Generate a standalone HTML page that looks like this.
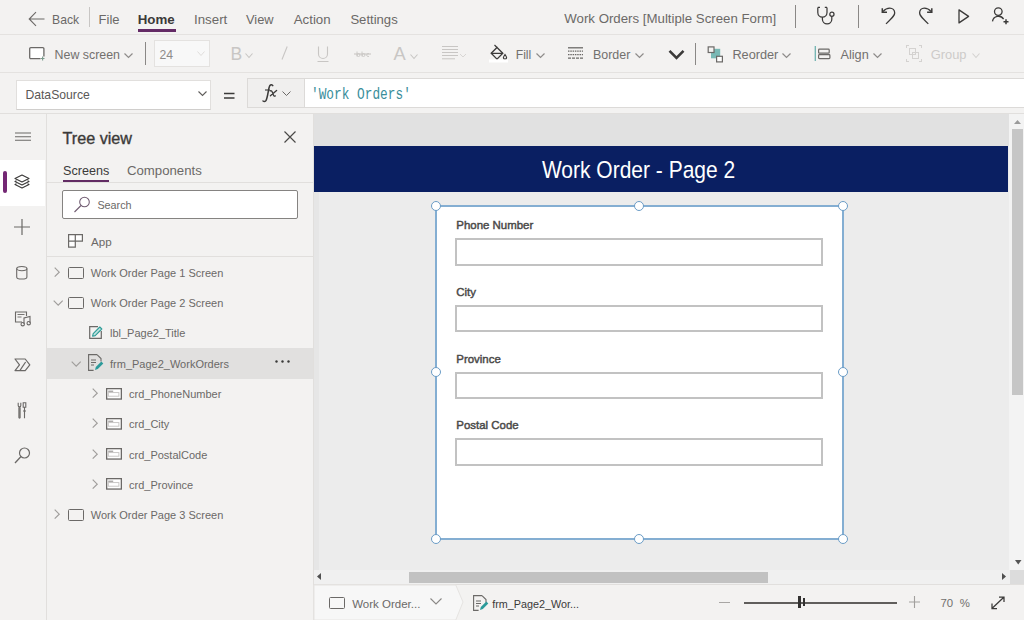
<!DOCTYPE html>
<html><head><meta charset="utf-8">
<style>
*{box-sizing:border-box;margin:0;padding:0}
html,body{width:1024px;height:620px;overflow:hidden;background:#f3f2f1;font-family:"Liberation Sans",sans-serif;color:#605e5c}
.a{position:absolute}
.t{position:absolute;white-space:nowrap;line-height:1}
svg{position:absolute;overflow:visible}
</style></head><body>
<div class="a" style="left:0px;top:0px;width:1024px;height:35px;background:#f3f2f1;border-bottom:1px solid #e4e2e0"></div>
<svg style="left:28px;top:11px" width="17" height="16" viewBox="0 0 17 16"><path d="M16.5 8H1.5M8 1.2L1.2 8 8 14.8" fill="none" stroke="#6b6967" stroke-width="1.1"/></svg>
<div class="t" style="left:52px;top:14px;font-size:12.2px;color:#6b6967;">Back</div>
<div class="a" style="left:88.5px;top:6.5px;width:1px;height:20px;background:#c8c6c4"></div>
<div class="t" style="left:98.6px;top:13px;font-size:13px;color:#6b6967;">File</div>
<div class="t" style="left:137.7px;top:13px;font-size:13.3px;color:#3b3a39;font-weight:bold">Home</div>
<div class="a" style="left:137.5px;top:29.2px;width:38.5px;height:2.6px;background:#642b66"></div>
<div class="t" style="left:194px;top:13px;font-size:13.3px;color:#6b6967;">Insert</div>
<div class="t" style="left:246px;top:14px;font-size:12.85px;color:#6b6967;">View</div>
<div class="t" style="left:293.7px;top:13px;font-size:13.3px;color:#6b6967;">Action</div>
<div class="t" style="left:350.4px;top:13px;font-size:13.1px;color:#6b6967;">Settings</div>
<div class="t" style="left:564.3px;top:12px;font-size:13.25px;color:#6b6967;">Work Orders [Multiple Screen Form]</div>
<div class="a" style="left:794.5px;top:4.5px;width:1px;height:23.5px;background:#8a8886"></div>
<svg style="left:816px;top:6px" width="20" height="20" viewBox="0 0 20 20"><path d="M1.8 1.4V6.6a4.6 4.6 0 0 0 9.2 0V1.4M1.8 1.4h2.2M11 1.4H8.8M6.4 11.2v2a4.7 4.7 0 0 0 9.4 0v-2.8" fill="none" stroke="#3b3a39" stroke-width="1.25"/><circle cx="15.9" cy="8.3" r="2.1" fill="none" stroke="#3b3a39" stroke-width="1.25"/></svg>
<div class="a" style="left:858px;top:4.5px;width:1px;height:23.5px;background:#8a8886"></div>
<svg style="left:880px;top:5px" width="18" height="20" viewBox="0 0 18 20"><path d="M2.3 3.2v4h4.7" fill="none" stroke="#3b3a39" stroke-width="1.5"/><path d="M2.9 6.6C5 4.2 7.4 3.1 9.8 3.1c2.8 0 4.9 2.2 4.9 4.9 0 2.2-1.3 3.8-8.7 10.9" fill="none" stroke="#3b3a39" stroke-width="1.3"/></svg>
<svg style="left:916px;top:5px" width="18" height="20" viewBox="0 0 18 20"><path d="M15.8 3.2v4h-4.7" fill="none" stroke="#3b3a39" stroke-width="1.5"/><path d="M15.2 6.6C13.1 4.2 10.7 3.1 8.3 3.1 5.5 3.1 3.6 5.3 3.6 8c0 2.2 1.3 3.8 8.7 10.9" fill="none" stroke="#3b3a39" stroke-width="1.3"/></svg>
<svg style="left:958px;top:8.5px" width="12" height="15" viewBox="0 0 12 15"><path d="M1 0.9v13l9.6-6.5z" fill="none" stroke="#3b3a39" stroke-width="1.3" stroke-linejoin="round"/></svg>
<svg style="left:991px;top:7px" width="19" height="17" viewBox="0 0 19 17"><circle cx="7.3" cy="4.6" r="3.8" fill="none" stroke="#3b3a39" stroke-width="1.3"/><path d="M1.5 14.4A6 6 0 0 1 12.6 12.2" fill="none" stroke="#3b3a39" stroke-width="1.3"/><path d="M15 12.2v5M12.5 14.7h5" stroke="#3b3a39" stroke-width="1.5"/></svg>
<div class="a" style="left:0px;top:35px;width:1024px;height:38px;background:#f3f2f1;border-bottom:1px solid #e4e2e0"></div>
<svg style="left:29px;top:47px" width="17" height="14" viewBox="0 0 17 14"><path d="M11.5 11.7H1.8A1.1 1.1 0 0 1 .7 10.6V1.8A1.1 1.1 0 0 1 1.8 .7h12A1.1 1.1 0 0 1 14.9 1.8V9.5" fill="#fff" stroke="#6b6967" stroke-width="1.3"/><path d="M13.6 9.6v3.8M11.7 11.5h3.8" stroke="#7a9a8c" stroke-width="1.1"/></svg>
<div class="t" style="left:54.6px;top:49px;font-size:12.4px;color:#72706e;">New screen</div>
<svg style="left:124px;top:52.8px" width="9" height="5" viewBox="0 0 9 5"><path d="M0.5 0.5l4.0 4 4.0 -4" fill="none" stroke="#8e8c8a" stroke-width="1.2"/></svg>
<div class="a" style="left:145px;top:42px;width:1px;height:22.5px;background:#8a8886"></div>
<div class="a" style="left:153.5px;top:39.5px;width:56px;height:27px;border:1px solid #e4e2e0;background:#f8f8f8"></div>
<div class="t" style="left:159.6px;top:49px;font-size:12.2px;color:#8e8c8a;">24</div>
<svg style="left:197px;top:51px" width="8" height="5" viewBox="0 0 8 5"><path d="M0.5 0.5l3.5 4 3.5 -4" fill="none" stroke="#e0dedc" stroke-width="1"/></svg>
<div class="t" style="left:230.5px;top:46px;font-size:17.5px;color:#c8c6c4;">B</div>
<svg style="left:245px;top:53px" width="8" height="5" viewBox="0 0 8 5"><path d="M0.5 0.5l3.5 4 3.5 -4" fill="none" stroke="#c8c6c4" stroke-width="1.1"/></svg>
<svg style="left:281px;top:46px" width="7" height="14" viewBox="0 0 7 14"><path d="M6.2 0.5L1 13.5" stroke="#c8c6c4" stroke-width="1.1"/></svg>
<svg style="left:317px;top:46px" width="12" height="17" viewBox="0 0 12 17"><path d="M1.5 0.5v7.5a4.5 4.5 0 0 0 9 0V0.5M0.5 15.5h11" fill="none" stroke="#c8c6c4" stroke-width="1.1"/></svg>
<svg style="left:354px;top:50px" width="17" height="8" viewBox="0 0 17 8"><path d="M0 4h17" stroke="#c8c6c4" stroke-width="1.1"/><path d="M3 1.5v5M3 5a1.5 1.5 0 1 0 3 0 1.5 1.5 0 1 0-3 0M8 1.5v5M8 5a1.5 1.5 0 1 0 3 0 1.5 1.5 0 1 0-3 0M15 3.8a1.5 1.5 0 1 0 0 2.5" fill="none" stroke="#c8c6c4" stroke-width="0.9"/></svg>
<div class="t" style="left:393.5px;top:45px;font-size:18.3px;color:#c8c6c4;">A</div>
<svg style="left:410px;top:54px" width="8" height="5" viewBox="0 0 8 5"><path d="M0.5 0.5l3.5 4 3.5 -4" fill="none" stroke="#c8c6c4" stroke-width="1.1"/></svg>
<svg style="left:442px;top:46px" width="25" height="14" viewBox="0 0 25 14"><path d="M0 0.5h16M0 3.5h16M0 6.5h16M0 9.5h16M0 12.8h13" stroke="#c8c6c4" stroke-width="1"/><path d="M18 8l3 3 3-3" fill="none" stroke="#d8d6d4" stroke-width="1"/></svg>
<svg style="left:489px;top:44px" width="20" height="19" viewBox="0 0 20 19"><path d="M2.2 9.3l5.8-5.8 5.8 5.8-5.8 5.8z" fill="none" stroke="#3b3a39" stroke-width="1.3"/><path d="M5.5 1l2.5 2.5M2.2 9.3h11.6" fill="none" stroke="#3b3a39" stroke-width="1.2"/><path d="M16 10.5c-1 1.5-1.6 2.4-1.6 3a1.6 1.6 0 0 0 3.2 0c0-.6-.6-1.5-1.6-3z" fill="none" stroke="#3b3a39" stroke-width="1.2"/><rect x="0" y="15.5" width="19" height="3" fill="#ffffff"/></svg>
<div class="t" style="left:515.7px;top:49px;font-size:12.2px;color:#72706e;">Fill</div>
<svg style="left:535.5px;top:52.8px" width="9" height="5" viewBox="0 0 9 5"><path d="M0.5 0.5l4.0 4 4.0 -4" fill="none" stroke="#8e8c8a" stroke-width="1.2"/></svg>
<svg style="left:567.5px;top:47px" width="16" height="12" viewBox="0 0 16 12"><path d="M0 .8h15" stroke="#6b6967" stroke-width="1.3"/><path d="M0 4.2h15M0 7.6h15" stroke="#6b6967" stroke-width="1.3" stroke-dasharray="1.5 .8"/><path d="M0 11.2h15" stroke="#6b6967" stroke-width="1.3" stroke-dasharray="3 1"/></svg>
<div class="t" style="left:593px;top:49px;font-size:12.45px;color:#72706e;">Border</div>
<svg style="left:635.3px;top:52.8px" width="9" height="5" viewBox="0 0 9 5"><path d="M0.5 0.5l4.0 4 4.0 -4" fill="none" stroke="#8e8c8a" stroke-width="1.2"/></svg>
<svg style="left:668px;top:49px" width="17" height="11" viewBox="0 0 17 11"><path d="M1.5 1.8l7 7 7-7" fill="none" stroke="#3b3a39" stroke-width="2.6"/></svg>
<div class="a" style="left:695px;top:42.5px;width:1px;height:22px;background:#8a8886"></div>
<svg style="left:707px;top:45.5px" width="17" height="17" viewBox="0 0 17 17"><rect x="4" y="2.8" width="9.2" height="9.5" fill="#79b9b5"/><rect x="1.2" y="0.9" width="5.8" height="5.6" fill="#f3f2f1" stroke="#6b6967" stroke-width="1.2"/><rect x="9.6" y="10.3" width="5.8" height="5.6" fill="#fff" stroke="#6b6967" stroke-width="1.2"/></svg>
<div class="t" style="left:732.4px;top:49px;font-size:12.73px;color:#72706e;">Reorder</div>
<svg style="left:782px;top:52.8px" width="9" height="5" viewBox="0 0 9 5"><path d="M0.5 0.5l4.0 4 4.0 -4" fill="none" stroke="#8e8c8a" stroke-width="1.2"/></svg>
<svg style="left:813px;top:45px" width="18" height="17" viewBox="0 0 18 17"><path d="M2.3 1v15" stroke="#6fb3af" stroke-width="1.3"/><rect x="5.6" y="4.2" width="10.6" height="4" rx=".8" fill="none" stroke="#6b6967" stroke-width="1.2"/><rect x="5.6" y="9.6" width="11.3" height="4" rx=".8" fill="none" stroke="#6b6967" stroke-width="1.2"/></svg>
<div class="t" style="left:840.5px;top:49px;font-size:12.7px;color:#72706e;">Align</div>
<svg style="left:873px;top:52.8px" width="9" height="5" viewBox="0 0 9 5"><path d="M0.5 0.5l4.0 4 4.0 -4" fill="none" stroke="#8e8c8a" stroke-width="1.2"/></svg>
<svg style="left:906px;top:45px" width="16" height="17" viewBox="0 0 16 17"><path d="M0.5 0v3M0 .5h3M15.5 0v3M13 .5h3M0.5 17v-3M0 16.5h3M15.5 17v-3M13 16.5h3" stroke="#d4d2d0" stroke-width="1"/><rect x="3.5" y="3.5" width="6" height="6" fill="none" stroke="#d4d2d0"/><rect x="6.5" y="7.5" width="6" height="6" fill="none" stroke="#d4d2d0"/></svg>
<div class="t" style="left:930.7px;top:49px;font-size:12.9px;color:#cdcbc9;">Group</div>
<svg style="left:971.5px;top:53px" width="8" height="5" viewBox="0 0 8 5"><path d="M0.5 0.5l3.5 4 3.5 -4" fill="none" stroke="#d4d2d0" stroke-width="1.1"/></svg>
<div class="a" style="left:0px;top:73px;width:1024px;height:41px;background:#f3f2f1;border-bottom:1px solid #e1dfdd"></div>
<div class="a" style="left:16px;top:79.5px;width:195px;height:30.5px;background:#fff;border:1px solid #e1dfdd;border-bottom-color:#d0cecc"></div>
<div class="t" style="left:25.4px;top:89px;font-size:12.2px;color:#5a5856;">DataSource</div>
<svg style="left:198.2px;top:91.2px" width="9" height="5" viewBox="0 0 9 5"><path d="M0.5 0.5l4.0 4 4.0 -4" fill="none" stroke="#605e5c" stroke-width="1.1"/></svg>
<svg style="left:224px;top:91.5px" width="11" height="8" viewBox="0 0 11 8"><path d="M0 1.6h10.5M0 6h10.5" stroke="#3b3a39" stroke-width="1.5"/></svg>
<div class="a" style="left:247px;top:78px;width:57.5px;height:30px;background:#f0efee;border:1px solid #dcdad8"></div>
<svg style="left:258px;top:82px" width="22" height="22" viewBox="0 0 22 22"><path d="M14.8 3.6c-.5-1.1-2-1.4-2.9-.1-.7 1-1.1 3-1.7 6.5-.7 4-1.3 7.4-2.4 8.7-.8.9-2 .9-2.8.3" fill="none" stroke="#3b3a39" stroke-width="1.5" stroke-linecap="round"/><path d="M7 8h5" stroke="#3b3a39" stroke-width="1.1"/><path d="M12.2 8.9c1.1-.5 1.8.2 2.3 1.7l.9 2.5c.4 1 1 1.3 1.9.8M18.6 8.5l-6.2 5.3" fill="none" stroke="#3b3a39" stroke-width="1.3" stroke-linecap="round"/></svg>
<svg style="left:282px;top:90.5px" width="9" height="5" viewBox="0 0 9 5"><path d="M0.5 0.5l4.0 4 4.0 -4" fill="none" stroke="#6b6967" stroke-width="1"/></svg>
<div class="a" style="left:304.5px;top:78px;width:720px;height:30px;background:#fff;border-top:1px solid #dcdad8;border-bottom:1px solid #dcdad8"></div>
<div class="t" style="left:311px;top:91.3px;font-size:12.8px;font-family:'Liberation Mono',monospace;color:#3a8e9b;transform:scaleY(1.25);transform-origin:0 100%">'Work Orders'</div>
<div class="a" style="left:0px;top:114px;width:47px;height:506px;background:#f3f2f1;border-right:1px solid #e1dfdd"></div>
<svg style="left:14.5px;top:132px" width="16" height="10" viewBox="0 0 16 10"><path d="M0 1h16M0 4.7h16M0 8.3h16" stroke="#6b6967" stroke-width="1.1"/></svg>
<div class="a" style="left:0px;top:160px;width:45px;height:45.5px;background:#fff"></div>
<div class="a" style="left:2.6px;top:170.8px;width:4px;height:22.5px;background:#742774;border-radius:2px"></div>
<svg style="left:14px;top:174px" width="16" height="15" viewBox="0 0 16 15"><path d="M8 1L1 4.5 8 8l7-3.5z" fill="none" stroke="#3b3a39" stroke-width="1.1" stroke-linejoin="round"/><path d="M2.5 6.8L1 7.6 8 11l7-3.4-1.5-.8M2.5 9.8L1 10.6 8 14l7-3.4-1.5-.8" fill="none" stroke="#3b3a39" stroke-width="1.1" stroke-linejoin="round"/></svg>
<svg style="left:14px;top:219px" width="16" height="16" viewBox="0 0 16 16"><path d="M8 0v16M0 8h16" stroke="#6b6967" stroke-width="1.2"/></svg>
<svg style="left:16px;top:266px" width="12" height="15" viewBox="0 0 12 15"><ellipse cx="5.8" cy="2.6" rx="5.1" ry="2.1" fill="none" stroke="#6b6967" stroke-width="1.1"/><path d="M0.7 2.6v8.3c0 1.2 2.3 2.1 5.1 2.1s5.1-.9 5.1-2.1V2.6" fill="none" stroke="#6b6967" stroke-width="1.1"/></svg>
<svg style="left:14px;top:311px" width="17" height="16" viewBox="0 0 17 16"><path d="M8 11H1.5V1h11v4" fill="none" stroke="#6b6967" stroke-width="1.1"/><path d="M3.5 3.5h7M3.5 6h4" stroke="#6b6967" stroke-width="0.9"/><path d="M10 13V7l6-1.5V12" fill="none" stroke="#6b6967" stroke-width="1.1"/><circle cx="8.7" cy="13.2" r="1.7" fill="none" stroke="#6b6967" stroke-width="1.1"/><circle cx="14.7" cy="12.2" r="1.7" fill="none" stroke="#6b6967" stroke-width="1.1"/></svg>
<svg style="left:14px;top:358px" width="17" height="14" viewBox="0 0 17 14"><path d="M1 1H11.2L15.8 6.8 11.2 12.6H1L5.5 6.8Z" fill="none" stroke="#6b6967" stroke-width="1.2" stroke-linejoin="round"/><path d="M6 12.4L11.6 4" stroke="#6b6967" stroke-width="1.2"/></svg>
<svg style="left:17px;top:401.5px" width="11" height="17" viewBox="0 0 11 17"><path d="M1.2 0.8v2.6a1.3 1.3 0 0 0 2.6 0V0.8M1.9 5.2h1.2v10.3a.6.6 0 0 1-1.2 0z" fill="none" stroke="#6b6967" stroke-width="1.1"/><path d="M6.2 0.8h2.6v4.5H6.2zM7.5 5.3v11M6 9h3" fill="none" stroke="#6b6967" stroke-width="1.1"/></svg>
<svg style="left:14px;top:447px" width="17" height="17" viewBox="0 0 17 17"><circle cx="10.5" cy="6" r="5" fill="none" stroke="#6b6967" stroke-width="1.2"/><path d="M7 9.5L1 16" stroke="#6b6967" stroke-width="1.3"/></svg>
<div class="a" style="left:47px;top:114px;width:267px;height:506px;background:#f3f2f1;border-right:1px solid #e1dfdd"></div>
<div class="t" style="left:62.5px;top:130px;font-size:16.2px;color:#3b3a39;-webkit-text-stroke:0.35px currentColor">Tree view</div>
<svg style="left:283.7px;top:130.5px" width="12" height="12" viewBox="0 0 12 12"><path d="M0.5 0.5l11 11M11.5 0.5l-11 11" stroke="#4a4948" stroke-width="1.15"/></svg>
<div class="t" style="left:63px;top:165px;font-size:12.6px;color:#3b3a39;">Screens</div>
<div class="t" style="left:127px;top:164px;font-size:13.2px;color:#6b6967;">Components</div>
<div class="a" style="left:47px;top:182px;width:266px;height:1px;background:#e1dfdd"></div>
<div class="a" style="left:62.5px;top:179.6px;width:46.5px;height:2.1px;background:#622c64"></div>
<div class="a" style="left:62.3px;top:190px;width:235.5px;height:29px;background:#fff;border:1px solid #858381;border-radius:2px"></div>
<svg style="left:73px;top:196px" width="18" height="17" viewBox="0 0 18 17"><circle cx="11.5" cy="6" r="4.8" fill="none" stroke="#6f5a70" stroke-width="1.05"/><path d="M8 9.5L1.5 16" stroke="#6f5a70" stroke-width="1.1"/></svg>
<div class="t" style="left:97.4px;top:200px;font-size:10.8px;color:#6b6967;">Search</div>
<svg style="left:68px;top:234px" width="15" height="15" viewBox="0 0 15 15"><path d="M0.6 0.6h13.8v6.6H7.3V13.2H0.6z" fill="#fff" stroke="#6b6967" stroke-width="1.2"/><path d="M0.6 7.2h6.7M7.3 .6v6.6" fill="none" stroke="#6b6967" stroke-width="1.2"/></svg>
<div class="t" style="left:91px;top:236px;font-size:11.6px;color:#6b6967;">App</div>
<div class="a" style="left:47px;top:256px;width:266px;height:1px;background:#e1dfdd"></div>
<div class="a" style="left:47px;top:348px;width:266px;height:31px;background:#e1e0df"></div>
<svg style="left:54.3px;top:266.7px" width="6" height="10" viewBox="0 0 6 10"><path d="M0.7 0.7l4.5 4.5-4.5 4.5" fill="none" stroke="#a09e9c" stroke-width="1.2"/></svg>
<div class="a" style="left:68px;top:267px;width:16px;height:12px;border:1.3px solid #6b6967;border-radius:1.5px"></div>
<div class="t" style="left:90.8px;top:268px;font-size:11px;color:#6b6967;">Work Order Page 1 Screen</div>
<svg style="left:52.7px;top:299.7px" width="10" height="6" viewBox="0 0 10 6"><path d="M0.7 0.7l4.5 4.5 4.5-4.5" fill="none" stroke="#a09e9c" stroke-width="1.2"/></svg>
<div class="a" style="left:68px;top:297px;width:16px;height:12px;border:1.3px solid #6b6967;border-radius:1.5px"></div>
<div class="t" style="left:90.8px;top:298px;font-size:11px;color:#6b6967;">Work Order Page 2 Screen</div>
<svg style="left:89px;top:326px" width="14" height="13" viewBox="0 0 14 13"><path d="M9 .7H.7v11.6h11.6V5" fill="none" stroke="#6b6967" stroke-width="1.2"/><path d="M3.6 10.2l.6-2.6 6.6-6.6 2 2-6.6 6.6z" fill="#bfe3e0" stroke="#2f9c97" stroke-width="1.1" stroke-linejoin="round"/></svg>
<div class="t" style="left:110px;top:328px;font-size:11px;color:#6b6967;">lbl_Page2_Title</div>
<svg style="left:71.2px;top:360.7px" width="10" height="6" viewBox="0 0 10 6"><path d="M0.7 0.7l4.5 4.5 4.5-4.5" fill="none" stroke="#a09e9c" stroke-width="1.2"/></svg>
<svg style="left:88px;top:354px" width="15" height="17" viewBox="0 0 15 17"><path d="M9 .6H.6v15.8h5M9 .6l4 4v3" fill="none" stroke="#6b6967" stroke-width="1.1"/><path d="M3 6h5M3 8.5h5M3 11h3" stroke="#6b6967" stroke-width="1"/><path d="M7 16l.8-3 5.5-5.5 2 2-5.5 5.5z" fill="#2b9a9a"/></svg>
<div class="t" style="left:110px;top:359px;font-size:11px;color:#6b6967;">frm_Page2_WorkOrders</div>
<svg style="left:92.3px;top:387.7px" width="6" height="10" viewBox="0 0 6 10"><path d="M0.7 0.7l4.5 4.5-4.5 4.5" fill="none" stroke="#a09e9c" stroke-width="1.2"/></svg>
<svg style="left:106px;top:388px" width="16" height="12" viewBox="0 0 16 12"><rect x="0.65" y="0.65" width="14.7" height="10.4" fill="#fff" stroke="#6b6967" stroke-width="1.3"/><path d="M2.2 3.2h5" stroke="#7a7876" stroke-width="0.9"/><rect x="2.3" y="4.6" width="10.6" height="3.6" fill="none" stroke="#c4c2c0" stroke-width="0.9"/></svg>
<div class="t" style="left:129px;top:389px;font-size:11px;color:#6b6967;">crd_PhoneNumber</div>
<svg style="left:92.3px;top:417.7px" width="6" height="10" viewBox="0 0 6 10"><path d="M0.7 0.7l4.5 4.5-4.5 4.5" fill="none" stroke="#a09e9c" stroke-width="1.2"/></svg>
<svg style="left:106px;top:418px" width="16" height="12" viewBox="0 0 16 12"><rect x="0.65" y="0.65" width="14.7" height="10.4" fill="#fff" stroke="#6b6967" stroke-width="1.3"/><path d="M2.2 3.2h5" stroke="#7a7876" stroke-width="0.9"/><rect x="2.3" y="4.6" width="10.6" height="3.6" fill="none" stroke="#c4c2c0" stroke-width="0.9"/></svg>
<div class="t" style="left:129px;top:419px;font-size:11px;color:#6b6967;">crd_City</div>
<svg style="left:92.3px;top:448.7px" width="6" height="10" viewBox="0 0 6 10"><path d="M0.7 0.7l4.5 4.5-4.5 4.5" fill="none" stroke="#a09e9c" stroke-width="1.2"/></svg>
<svg style="left:106px;top:448px" width="16" height="12" viewBox="0 0 16 12"><rect x="0.65" y="0.65" width="14.7" height="10.4" fill="#fff" stroke="#6b6967" stroke-width="1.3"/><path d="M2.2 3.2h5" stroke="#7a7876" stroke-width="0.9"/><rect x="2.3" y="4.6" width="10.6" height="3.6" fill="none" stroke="#c4c2c0" stroke-width="0.9"/></svg>
<div class="t" style="left:129px;top:450px;font-size:11px;color:#6b6967;">crd_PostalCode</div>
<svg style="left:92.3px;top:478.7px" width="6" height="10" viewBox="0 0 6 10"><path d="M0.7 0.7l4.5 4.5-4.5 4.5" fill="none" stroke="#a09e9c" stroke-width="1.2"/></svg>
<svg style="left:106px;top:478px" width="16" height="12" viewBox="0 0 16 12"><rect x="0.65" y="0.65" width="14.7" height="10.4" fill="#fff" stroke="#6b6967" stroke-width="1.3"/><path d="M2.2 3.2h5" stroke="#7a7876" stroke-width="0.9"/><rect x="2.3" y="4.6" width="10.6" height="3.6" fill="none" stroke="#c4c2c0" stroke-width="0.9"/></svg>
<div class="t" style="left:129px;top:480px;font-size:11px;color:#6b6967;">crd_Province</div>
<svg style="left:54.3px;top:508.7px" width="6" height="10" viewBox="0 0 6 10"><path d="M0.7 0.7l4.5 4.5-4.5 4.5" fill="none" stroke="#a09e9c" stroke-width="1.2"/></svg>
<div class="a" style="left:68px;top:509px;width:16px;height:12px;border:1.3px solid #6b6967;border-radius:1.5px"></div>
<div class="t" style="left:90.8px;top:510px;font-size:11px;color:#6b6967;">Work Order Page 3 Screen</div>
<svg style="left:275px;top:360px" width="15" height="3" viewBox="0 0 15 3"><circle cx="1.5" cy="1.5" r="1.2" fill="#3b3a39"/><circle cx="7.5" cy="1.5" r="1.2" fill="#3b3a39"/><circle cx="13.5" cy="1.5" r="1.2" fill="#3b3a39"/></svg>
<div class="a" style="left:314px;top:114px;width:710px;height:470px;background:#ececec"></div>
<div class="a" style="left:314px;top:114px;width:696px;height:32px;background:#e1e1e1"></div>
<div class="a" style="left:314px;top:192px;width:4.5px;height:378px;background:#e6e6e6"></div>
<div class="a" style="left:314px;top:146px;width:694px;height:46.4px;background:#0a1f62"></div>
<div class="t" style="left:541.9px;top:160px;font-size:21px;color:#ffffff;transform:scaleY(1.1);transform-origin:0 18px;">Work Order - Page 2</div>
<div class="a" style="left:434.5px;top:205px;width:409px;height:334.5px;background:#fff;border:2px solid #84aed2"></div>
<div class="t" style="left:456.3px;top:220px;font-size:11.45px;color:#4a4948;-webkit-text-stroke:0.45px currentColor">Phone Number</div>
<div class="a" style="left:455px;top:238.3px;width:368px;height:27.5px;border:2px solid #c2c2c2;background:#fff"></div>
<div class="t" style="left:456.3px;top:287px;font-size:11.45px;color:#4a4948;-webkit-text-stroke:0.45px currentColor">City</div>
<div class="a" style="left:455px;top:304.9px;width:368px;height:27.5px;border:2px solid #c2c2c2;background:#fff"></div>
<div class="t" style="left:456.3px;top:354px;font-size:11.45px;color:#4a4948;-webkit-text-stroke:0.45px currentColor">Province</div>
<div class="a" style="left:455px;top:371.5px;width:368px;height:27.5px;border:2px solid #c2c2c2;background:#fff"></div>
<div class="t" style="left:456.3px;top:420px;font-size:11.45px;color:#4a4948;-webkit-text-stroke:0.45px currentColor">Postal Code</div>
<div class="a" style="left:455px;top:438.1px;width:368px;height:27.5px;border:2px solid #c2c2c2;background:#fff"></div>
<div class="a" style="left:430.5px;top:201px;width:10px;height:10px;border-radius:50%;background:#fff;border:1.3px solid #6a9cc6"></div>
<div class="a" style="left:633.5px;top:201px;width:10px;height:10px;border-radius:50%;background:#fff;border:1.3px solid #6a9cc6"></div>
<div class="a" style="left:837.5px;top:201px;width:10px;height:10px;border-radius:50%;background:#fff;border:1.3px solid #6a9cc6"></div>
<div class="a" style="left:430.5px;top:367px;width:10px;height:10px;border-radius:50%;background:#fff;border:1.3px solid #6a9cc6"></div>
<div class="a" style="left:837.5px;top:367px;width:10px;height:10px;border-radius:50%;background:#fff;border:1.3px solid #6a9cc6"></div>
<div class="a" style="left:430.5px;top:533.5px;width:10px;height:10px;border-radius:50%;background:#fff;border:1.3px solid #6a9cc6"></div>
<div class="a" style="left:633.5px;top:533.5px;width:10px;height:10px;border-radius:50%;background:#fff;border:1.3px solid #6a9cc6"></div>
<div class="a" style="left:837.5px;top:533.5px;width:10px;height:10px;border-radius:50%;background:#fff;border:1.3px solid #6a9cc6"></div>
<div class="a" style="left:1009px;top:114px;width:15px;height:456px;background:#f3f3f3"></div>
<div class="a" style="left:1012px;top:128.5px;width:11px;height:266.5px;background:#c6c6c6"></div>
<svg style="left:1014px;top:120px" width="7" height="4" viewBox="0 0 7 4"><path d="M0 4l3.5-4 3.5 4z" fill="#9a9a9a"/></svg>
<svg style="left:1014.5px;top:559.5px" width="6.5" height="4.5" viewBox="0 0 6.5 4.5"><path d="M0 0l3.25 4.5 3.25-4.5z" fill="#555"/></svg>
<div class="a" style="left:314px;top:570px;width:696px;height:14px;background:#f0f0f0"></div>
<div class="a" style="left:409px;top:572px;width:359px;height:10.5px;background:#c2c2c2"></div>
<svg style="left:317px;top:573px" width="4" height="7" viewBox="0 0 4 7"><path d="M4 0L0 3.5 4 7z" fill="#505050"/></svg>
<svg style="left:1002px;top:573px" width="4" height="7" viewBox="0 0 4 7"><path d="M0 0l4 3.5L0 7z" fill="#505050"/></svg>
<div class="a" style="left:1010px;top:570px;width:14px;height:14px;background:#dcdcdc"></div>
<div class="a" style="left:314px;top:584px;width:710px;height:36px;background:#f3f2f1;border-top:1px solid #e1dfdd"></div>
<svg style="left:314px;top:585px" width="152" height="35" viewBox="0 0 152 35"><path d="M0 0H141.8L149 17 141.8 35H0z" fill="#f7f7f7" stroke="#e6e4e2" stroke-width="1"/></svg>
<div class="a" style="left:329px;top:597px;width:16px;height:12px;border:1.3px solid #6b6967;border-radius:1.5px"></div>
<div class="t" style="left:352.2px;top:599px;font-size:11.5px;color:#6b6967;">Work Order...</div>
<svg style="left:430px;top:598px" width="12" height="7" viewBox="0 0 12 7"><path d="M0.5 0.5l5.5 5.5 5.5-5.5" fill="none" stroke="#8a8886" stroke-width="1.1"/></svg>
<svg style="left:473px;top:595px" width="15" height="16" viewBox="0 0 15 16"><path d="M9 .6H.6v14.8h5M9 .6l4 4v3" fill="none" stroke="#6b6967" stroke-width="1.1"/><path d="M3 6h5M3 8.5h5M3 11h3" stroke="#6b6967" stroke-width="1"/><path d="M7 15l.8-3 5.5-5.5 2 2-5.5 5.5z" fill="#2b9a9a"/></svg>
<div class="t" style="left:492.2px;top:599px;font-size:10.8px;color:#3b3a39;">frm_Page2_Wor...</div>
<div class="a" style="left:718.5px;top:601.5px;width:11px;height:1.5px;background:#a8a6a4"></div>
<div class="a" style="left:744px;top:601.5px;width:153px;height:2px;background:#605e5c"></div>
<div class="a" style="left:798px;top:596px;width:3px;height:12px;background:#323130"></div>
<div class="a" style="left:803px;top:598px;width:2px;height:8px;background:#323130"></div>
<svg style="left:909px;top:596px" width="11" height="12" viewBox="0 0 11 12"><path d="M5.5 0v12M0 6h11" stroke="#a19f9d" stroke-width="1.1"/></svg>
<div class="t" style="left:940.5px;top:598px;font-size:11.4px;color:#72706e;">70</div>
<div class="t" style="left:959.8px;top:598px;font-size:11.4px;color:#72706e;">%</div>
<svg style="left:990.5px;top:596px" width="14" height="13.5" viewBox="0 0 14 13.5"><path d="M1.2 12.3L12.8 1.2M8 1h5v5M1 7.5v5h5" fill="none" stroke="#3b3a39" stroke-width="1.25"/></svg>
</body></html>
